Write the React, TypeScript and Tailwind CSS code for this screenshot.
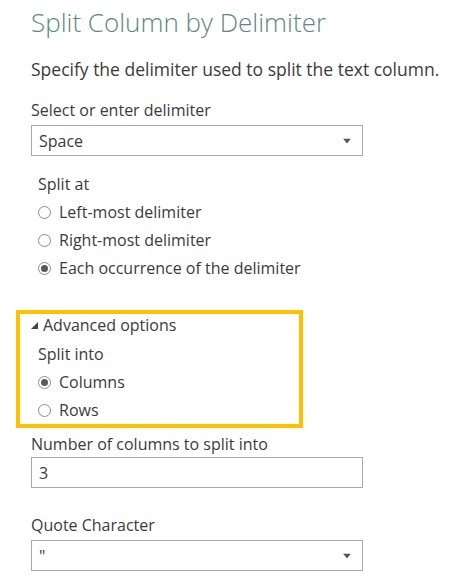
import type { ReactNode } from 'react'

const FONT = { fontFamily: '"Open Sans", "Noto Sans", sans-serif' }

function Caret() {
  return (
    <svg width="8" height="5" viewBox="0 0 8 5" className="absolute right-[11px] top-1/2 -translate-y-1/2">
      <path d="M0 0h8L4 5z" fill="#555" />
    </svg>
  )
}

function Field({ children, dropdown }: { children: ReactNode; dropdown?: boolean }) {
  return (
    <div className="relative flex h-[31px] w-[332px] items-center border border-[#a9a9a9] bg-white pl-[7px] text-[16px] text-[#3b3b3b]">
      {children}
      {dropdown && <Caret />}
    </div>
  )
}

function Radio({ label, checked }: { label: string; checked?: boolean }) {
  return (
    <div className="flex h-[28px] items-center gap-[8px] pl-[7px] text-[16px] text-[#3b3b3b]">
      <span className="flex h-[13px] w-[13px] items-center justify-center rounded-full border border-[#8c8c8c] bg-white">
        {checked && <span className="h-[7px] w-[7px] rounded-full bg-[#5a5a5a]" />}
      </span>
      <span className="leading-[28px]">{label}</span>
    </div>
  )
}

export default function App() {
  return (
    <div className="h-[585px] w-[474px] overflow-hidden bg-white pl-[31px] pt-[2px] text-[#3b3b3b]" style={FONT}>
      <h1 className="text-[26px] font-light leading-[40px] text-[#5b8a81]">Split Column by Delimiter</h1>
      <p className="mt-[13px] text-[17.5px] leading-[28px]">Specify the delimiter used to split the text column.</p>

      <p className="mt-[13px] text-[16px] leading-[28px]">Select or enter delimiter</p>
      <div className="mt-px">
        <Field dropdown>Space</Field>
      </div>

      <p className="mt-[14px] pl-[7px] text-[16px] leading-[28px]">Split at</p>
      <Radio label="Left-most delimiter" />
      <Radio label="Right-most delimiter" />
      <Radio label="Each occurrence of the delimiter" checked />

      <div className="-ml-[15px] mt-[28px] h-[118px] w-[287px] border-4 border-[#ffc000]">
        <div className="flex h-[22px] items-center gap-[5px] pl-[11px] text-[16px]">
          <svg width="7" height="7" viewBox="0 0 7 7">
            <path d="M7 0v7H0z" fill="#444" />
          </svg>
          <span className="leading-[22px]">Advanced options</span>
        </div>
        <div className="ml-[11px] mt-[4px]">
          <p className="pl-[7px] text-[16px] leading-[28px]">Split into</p>
          <Radio label="Columns" checked />
          <Radio label="Rows" />
        </div>
      </div>

      <p className="mt-[3px] text-[16px] leading-[26px]">Number of columns to split into</p>
      <Field>3</Field>

      <p className="mt-[23px] text-[16px] leading-[28px]">Quote Character</p>
      <div className="mt-px">
        <Field dropdown>"</Field>
      </div>
    </div>
  )
}
